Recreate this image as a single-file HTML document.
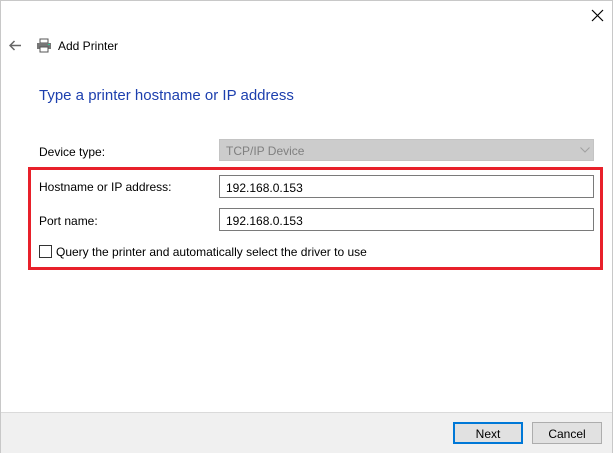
<!DOCTYPE html>
<html><head><style>
*{margin:0;padding:0;box-sizing:border-box}
body{width:614px;height:454px;position:relative;background:#fff;font-family:"Liberation Sans",sans-serif;font-size:12px;color:#000;overflow:hidden}
.win{position:absolute;left:0;top:0;width:613px;height:453px;border:1px solid #c8c8c8}
.a{position:absolute}
.lbl{position:absolute;left:39px;font-size:12px}
.inp{position:absolute;left:219px;width:375px;height:23px;border:1px solid #7a7a7a;background:#fff;padding:5px 0 0 6px;font-size:12px}
.btn{position:absolute;top:422px;width:70px;height:22px;background:#e1e1e1;border:1px solid #adadad;text-align:center;font-size:12px;padding-top:4px}
</style></head><body>
<div class="win"></div>
<svg class="a" style="left:591px;top:9px" width="13" height="13"><path d="M1 1L12 12M12 1L1 12" stroke="#000" stroke-width="1.2"/></svg>
<svg class="a" style="left:9px;top:40px" width="13" height="11"><path d="M1 5.5H12M5.5 1L1 5.5L5.5 10" stroke="#666" stroke-width="1.5" fill="none"/></svg>
<svg class="a" style="left:36px;top:38px" width="16" height="15"><rect x="4" y="1" width="8" height="4" fill="#fff" stroke="#555"/><rect x="1" y="5" width="14" height="6" fill="#777"/><rect x="4" y="9" width="8" height="5" fill="#fff" stroke="#555"/><rect x="12" y="6" width="2" height="1" fill="#3c9"/></svg>
<div class="a" style="left:58px;top:39px;font-size:12px">Add Printer</div>
<div class="a" style="left:39px;top:87px;font-size:15px;color:#1c3fae">Type a printer hostname or IP address</div>
<div class="lbl" style="top:145px">Device type:</div>
<div class="a" style="left:219px;top:139px;width:375px;height:22px;background:#ccc;border:1px solid #c4c4c4;color:#7f7f7f;padding:4px 0 0 6px">TCP/IP Device</div>
<svg class="a" style="left:580px;top:147px" width="10" height="6"><path d="M0.5 0.5L5 5L9.5 0.5" stroke="#a0a0a0" fill="none"/></svg>
<div class="a" style="left:28px;top:167px;width:575px;height:103px;border:3px solid #e8202a"></div>
<div class="lbl" style="top:180px">Hostname or IP address:</div>
<div class="inp" style="top:175px">192.168.0.153</div>
<div class="lbl" style="top:214px">Port name:</div>
<div class="inp" style="top:208px">192.168.0.153</div>
<div class="a" style="left:39px;top:245px;width:13px;height:13px;border:1px solid #333;background:#fff"></div>
<div class="a" style="left:56px;top:245px">Query the printer and automatically select the driver to use</div>
<div class="a" style="left:1px;top:412px;width:611px;height:41px;background:#f0f0f0;border-top:1px solid #dadada"></div>
<div class="btn" style="left:453px;border:2px solid #0078d7;padding-top:3px">Next</div>
<div class="btn" style="left:532px">Cancel</div>
</body></html>
